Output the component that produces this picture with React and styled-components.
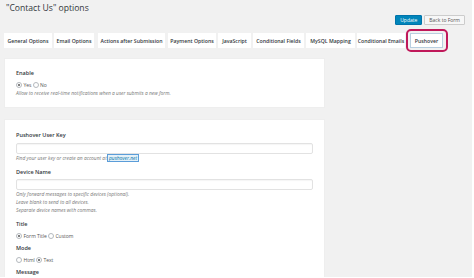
import React from "react";
import styled, { createGlobalStyle } from "styled-components";

const GlobalStyle = createGlobalStyle`
  html, body {
    margin: 0;
    padding: 0;
    background: #ffffff;
  }
  body {
    font-family: "Open Sans", "Noto Sans", "Liberation Sans", sans-serif;
    color: #23282d;
  }
`;

const Page = styled.div`
  width: 472px;
  height: 277px;
  overflow: hidden;
  box-sizing: border-box;
  background: #f1f1f1;
  padding: 3px 7px 0 4px;
`;

const Title = styled.h1`
  margin: 0 0 0 2px;
  font-size: 8.6px;
  line-height: 10px;
  font-weight: 400;
  color: #32373c;
`;

const ButtonRow = styled.div`
  display: flex;
  justify-content: flex-end;
  gap: 2px;
  margin-top: 2px;
`;

const Button = styled.button`
  height: 10px;
  padding: 0 4px;
  font-family: inherit;
  font-size: 5px;
  line-height: 8px;
  border-radius: 1px;
  border: 1px solid ${(p) => (p.$primary ? "#0073aa" : "#cccccc")};
  background: ${(p) => (p.$primary ? "#0085ba" : "#f7f7f7")};
  color: ${(p) => (p.$primary ? "#ffffff" : "#555555")};
  cursor: pointer;
`;

const Tabs = styled.div`
  display: flex;
  gap: 2px;
  margin-top: 8px;
  height: 15px;
`;

const Tab = styled.div`
  position: relative;
  display: flex;
  align-items: center;
  justify-content: center;
  box-sizing: border-box;
  width: ${(p) => p.$w}px;
  margin-left: ${(p) => p.$ml || 0}px;
  height: 15px;
  background: #ffffff;
  border: 1px solid ${(p) => (p.$active ? "#b9cfe0" : "#ffffff")};
  font-size: 5.2px;
  font-weight: 600;
  color: #32373c;
  white-space: nowrap;
`;

const Highlight = styled.span`
  position: absolute;
  left: -5px;
  right: -6px;
  top: -5px;
  bottom: -5px;
  border: 2px solid #c0185a;
  border-radius: 5px;
  pointer-events: none;
`;

const Panel = styled.section`
  width: 321px;
  box-sizing: border-box;
  background: #ffffff;
  border: 1px solid #eeeeee;
  padding: ${(p) => p.$pad};
  margin-top: ${(p) => p.$mt}px;
`;

const Label = styled.div`
  font-size: 5.5px;
  line-height: 8px;
  font-weight: 600;
  color: #32373c;
  margin-top: ${(p) => p.$mt || 0}px;
`;

const RadioRow = styled.div`
  display: flex;
  align-items: center;
  margin-top: 3px;
  height: 9px;
  font-size: 5px;
  color: #555555;
`;

const RadioItem = styled.label`
  display: flex;
  align-items: center;
  gap: 1.5px;
  margin-right: 1px;
`;

const Circle = styled.span`
  display: inline-flex;
  align-items: center;
  justify-content: center;
  width: 6px;
  height: 6px;
  box-sizing: border-box;
  border-radius: 50%;
  border: 1px solid #b4b9be;
  background: #ffffff;
  &::after {
    content: "";
    width: 2px;
    height: 2px;
    border-radius: 50%;
    background: ${(p) => (p.$on ? "#555555" : "transparent")};
  }
`;

const Desc = styled.div`
  font-size: 4.9px;
  line-height: 8px;
  font-style: italic;
  color: #777777;
`;

const Input = styled.div`
  height: 11px;
  box-sizing: border-box;
  margin-top: ${(p) => p.$mt}px;
  border: 1px solid #e2e2e2;
  border-radius: 2px;
  box-shadow: inset 0 1px 1px rgba(0, 0, 0, 0.04);
  background: #ffffff;
`;

const Link = styled.a`
  color: #0073aa;
  text-decoration: underline;
  background: #e5f1f8;
  outline: 1px solid #5b9dd9;
  padding: 0 1px;
`;

const Radio = ({ on, children }) => (
  <RadioItem>
    <Circle $on={on} />
    {children}
  </RadioItem>
);

const tabs = [
  ["General Options", 48, 0],
  ["Email Options", 40, 0],
  ["Actions after Submission", 67, 2],
  ["Payment Options", 48, 1],
  ["JavaScript", 33, 0],
  ["Conditional Fields", 51, 0],
  ["MySQL Mapping", 49, 0],
  ["Conditional Emails", 48, 0],
];

export default function App() {
  return (
    <>
      <GlobalStyle />
      <Page>
        <Title>"Contact Us" options</Title>
        <ButtonRow>
          <Button $primary>Update</Button>
          <Button>Back to Form</Button>
        </ButtonRow>
        <Tabs>
          {tabs.map(([name, w, ml]) => (
            <Tab key={name} $w={w} $ml={ml}>
              {name}
            </Tab>
          ))}
          <Tab $w={33} $ml={3} $active>
            Pushover
            <Highlight />
          </Tab>
        </Tabs>

        <Panel $mt={10} $pad="10px 11px 10px 11px">
          <Label>Enable</Label>
          <RadioRow>
            <Radio on>Yes</Radio>
            <Radio>No</Radio>
          </RadioRow>
          <Desc>Allow to receive real-time notifications when a user submits a new form.</Desc>
        </Panel>

        <Panel $mt={11} $pad="11px 11px 10px 11px">
          <Label>Pushover User Key</Label>
          <Input $mt={4} />
          <Desc>
            Find your user key or create an account at <Link>pushover.net</Link>
          </Desc>
          <Label $mt={6}>Device Name</Label>
          <Input $mt={3} />
          <Desc>
            Only forward messages to specific devices (optional).
            <br />
            Leave blank to send to all devices.
            <br />
            Separate device names with commas.
          </Desc>
          <Label $mt={6}>Title</Label>
          <RadioRow>
            <Radio on>Form Title</Radio>
            <Radio>Custom</Radio>
          </RadioRow>
          <Label $mt={4}>Mode</Label>
          <RadioRow>
            <Radio>Html</Radio>
            <Radio on>Text</Radio>
          </RadioRow>
          <Label $mt={4}>Message</Label>
          <Input $mt={3} />
        </Panel>
      </Page>
    </>
  );
}
